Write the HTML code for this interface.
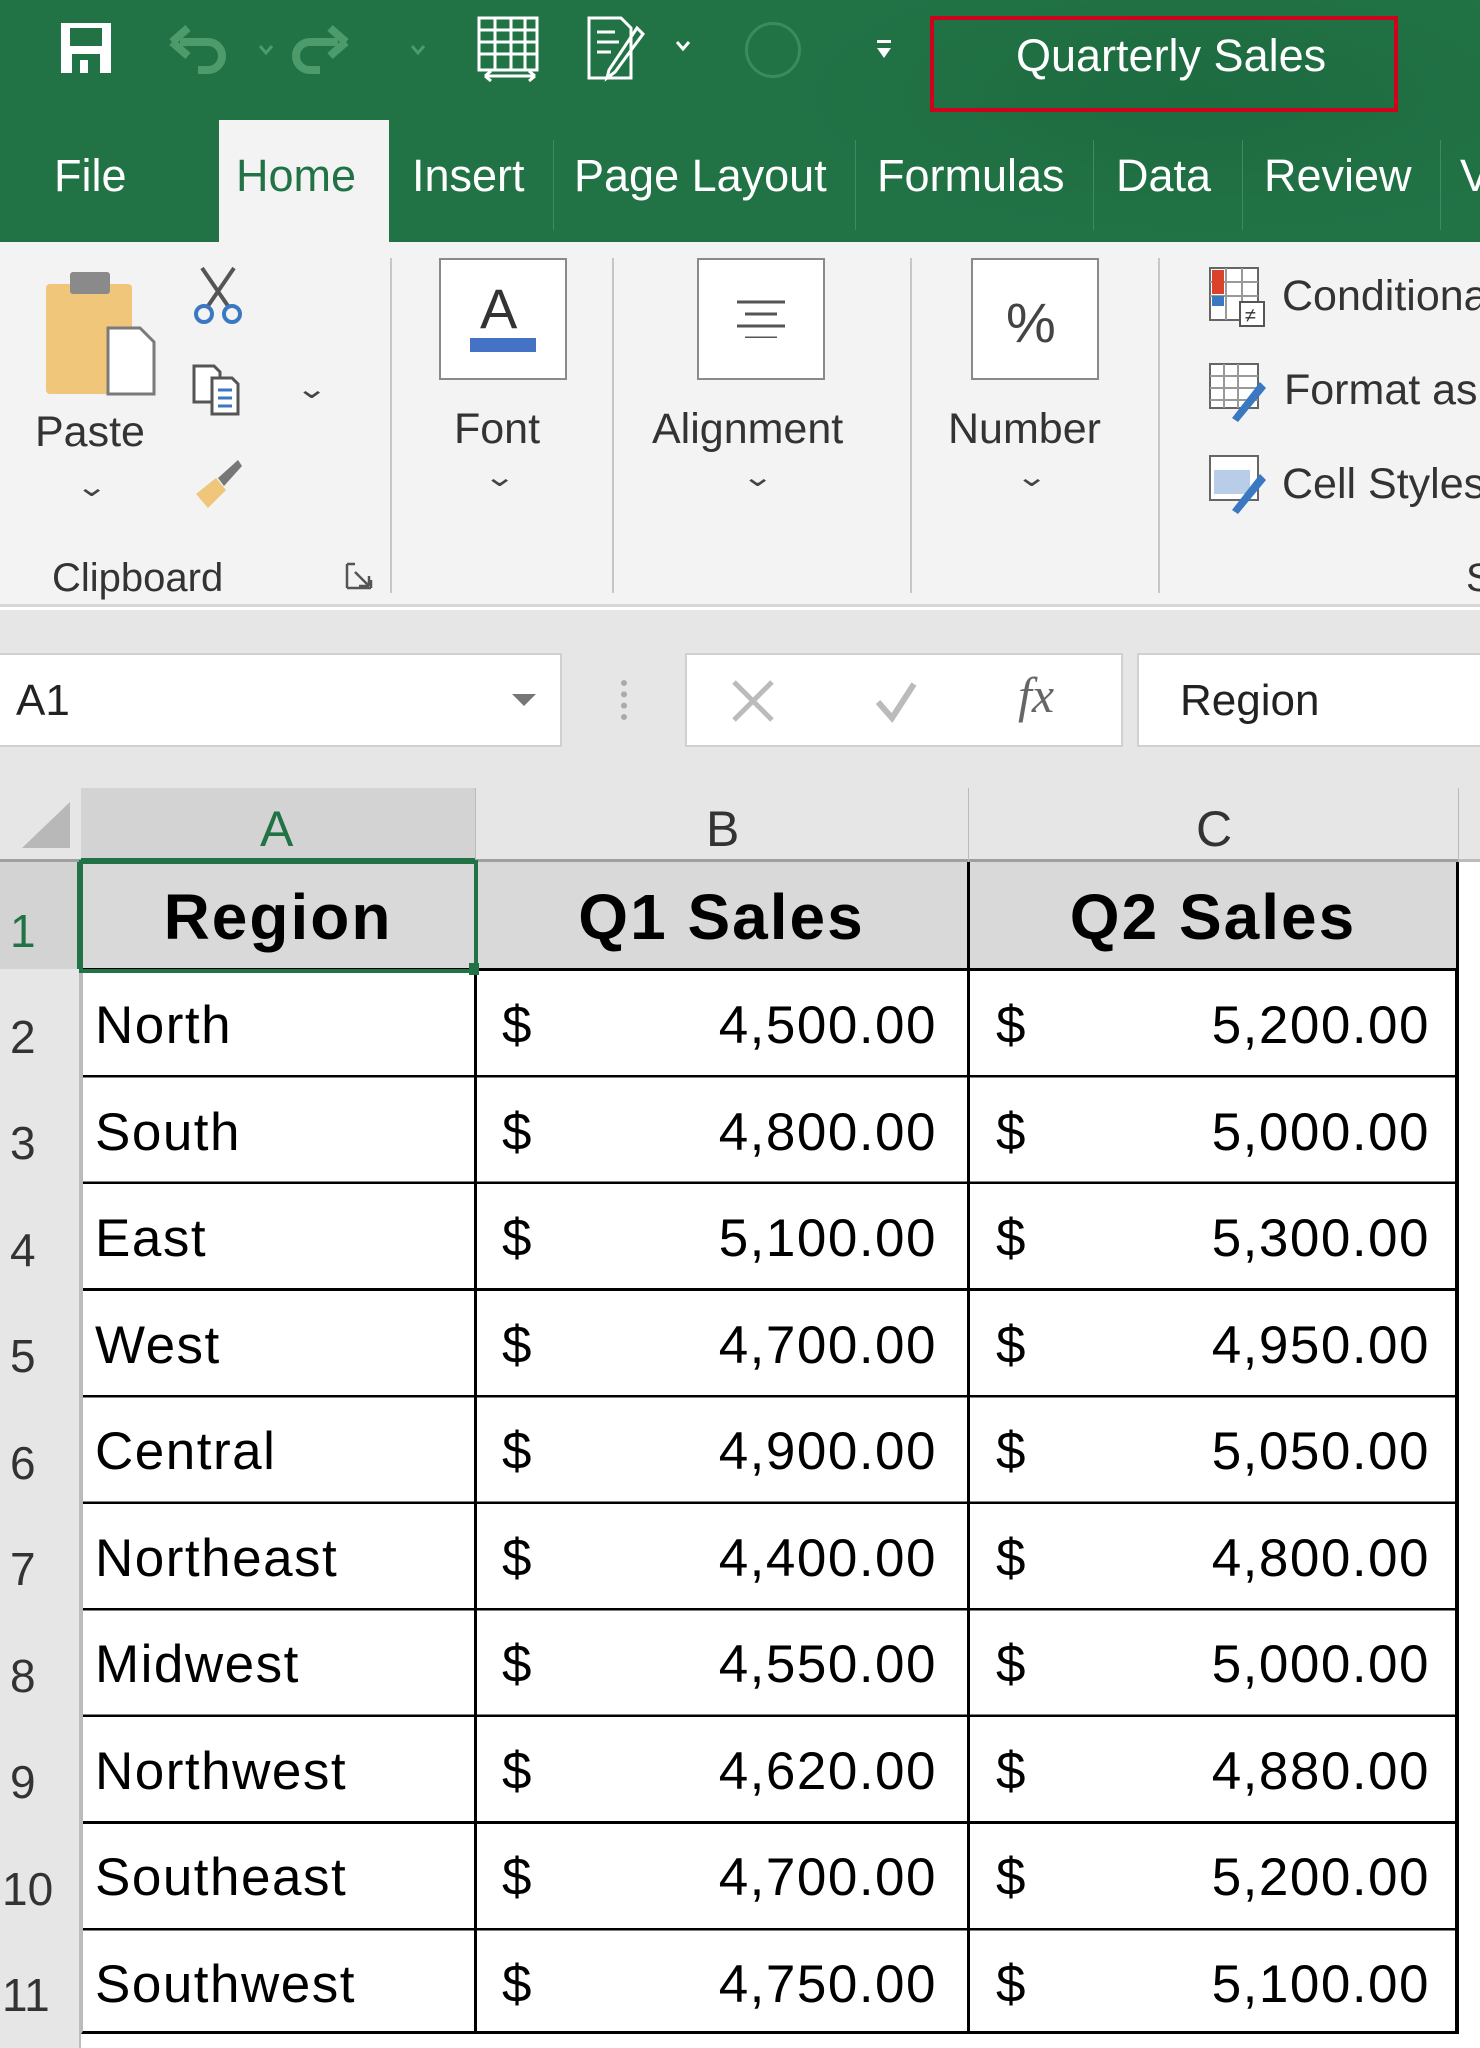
<!DOCTYPE html>
<html><head><meta charset="utf-8"><style>
*{margin:0;padding:0;box-sizing:border-box}
body{width:1480px;height:2048px;position:relative;overflow:hidden;background:#fff;font-family:"Liberation Sans",sans-serif}
.a{position:absolute;white-space:nowrap}
.tab{position:absolute;top:150px;font-size:45px;color:#fff;white-space:nowrap}
.sep{position:absolute;top:140px;width:1px;height:90px;background:#3f8a5e}
.rb{position:absolute;font-size:43px;color:#333;white-space:nowrap}
.vl{position:absolute;top:258px;width:2px;height:335px;background:#c6c6c6}
.box{position:absolute;top:258px;width:128px;height:122px;border:2px solid #8a8a8a;background:#fff}
.chev{position:absolute;font-size:28px;color:#444;transform:scaleX(1.4)}
.rh{position:absolute;left:0;width:81px;font-size:46px;color:#333;padding-left:10px}
.cell{position:absolute;font-size:53px;color:#000;white-space:nowrap;letter-spacing:1.5px}
</style></head><body>
<div class="a" style="left:0;top:0;width:1480px;height:242px;background:#217346"></div>
<div class="a" style="left:780px;top:0;width:700px;height:242px;background:radial-gradient(ellipse at 60% 40%,#1d6b40 0%,#217346 70%)"></div>
<svg class="a" style="left:58px;top:20px" width="56" height="56" viewBox="0 0 56 56"><rect x="3" y="3" width="50" height="50" fill="#fff"/><rect x="12" y="8" width="32" height="18" fill="#217346"/><rect x="14" y="34" width="28" height="19" fill="#217346"/><rect x="22" y="40" width="8" height="13" fill="#fff"/></svg>
<svg class="a" style="left:168px;top:22px" width="270" height="56" viewBox="0 0 270 56"><g fill="none" stroke="#4d9a6b" stroke-width="8"><path d="M12 20 H40 a14 14 0 0 1 0 28 H30"/><path d="M4 20 L20 6 M4 20 L20 34"/><path d="M170 20 H142 a14 14 0 0 0 0 28 H152"/><path d="M178 20 L162 6 M178 20 L162 34"/></g><g fill="none" stroke="#4d9a6b" stroke-width="3"><path d="M92 24 l6 7 l6 -7"/><path d="M244 24 l6 7 l6 -7"/></g></svg>
<svg class="a" style="left:475px;top:14px" width="70" height="68" viewBox="0 0 70 68"><g fill="none" stroke="#fff" stroke-width="3"><rect x="4" y="4" width="58" height="52"/><path d="M4 16H62M4 28H62M4 40H62M20 4V56M36 4V56M50 4V56"/><path d="M10 62H60M10 62l6-5M10 62l6 5M60 62l-6-5M60 62l-6 5"/></g></svg>
<svg class="a" style="left:585px;top:14px" width="110" height="68" viewBox="0 0 110 68"><g fill="none" stroke="#fff" stroke-width="3"><path d="M4 4H36L46 14V64H4Z"/><path d="M12 18H30M12 28H34M12 38H26"/><path d="M52 14L24 56L22 64L30 58L58 20Z"/><path d="M92 28l6 7l6-7"/></g></svg>
<div class="a" style="left:745px;top:22px;width:56px;height:56px;border:3px solid #3d8a5c;border-radius:50%"></div>
<svg class="a" style="left:875px;top:40px" width="20" height="24"><rect x="2" y="0" width="14" height="3" fill="#fff"/><path d="M2 8H16L9 18Z" fill="#fff"/></svg>
<div class="a" style="left:930px;top:16px;width:468px;height:96px;border:4px solid #d0021b"></div>
<div class="a" style="left:1016px;top:30px;font-size:45px;color:#fff">Quarterly Sales</div>
<div class="a" style="left:219px;top:120px;width:170px;height:122px;background:#f3f3f3"></div>
<div class="tab" style="left:54px">File</div>
<div class="tab" style="left:236px;color:#217346">Home</div>
<div class="tab" style="left:412px">Insert</div>
<div class="tab" style="left:574px">Page Layout</div>
<div class="tab" style="left:877px">Formulas</div>
<div class="tab" style="left:1116px">Data</div>
<div class="tab" style="left:1264px">Review</div>
<div class="tab" style="left:1460px">V</div>
<div class="sep" style="left:553px"></div><div class="sep" style="left:855px"></div><div class="sep" style="left:1093px"></div><div class="sep" style="left:1242px"></div><div class="sep" style="left:1440px"></div>
<div class="a" style="left:0;top:242px;width:1480px;height:365px;background:#f3f3f3;border-bottom:3px solid #d6d6d6"></div>
<svg class="a" style="left:44px;top:268px" width="115" height="130" viewBox="0 0 115 130"><rect x="2" y="16" width="86" height="110" rx="4" fill="#efc67a"/><rect x="26" y="4" width="40" height="22" rx="3" fill="#8a8a8a"/><path d="M64 60H96L110 74V126H64Z" fill="#fff" stroke="#7a7a7a" stroke-width="3"/></svg>
<svg class="a" style="left:188px;top:266px" width="60" height="60" viewBox="0 0 60 60"><g fill="none" stroke="#555" stroke-width="4"><path d="M14 2L40 40M46 2L20 40"/></g><g fill="none" stroke="#3b78c2" stroke-width="4"><circle cx="16" cy="48" r="8"/><circle cx="44" cy="48" r="8"/></g></svg>
<svg class="a" style="left:190px;top:362px" width="56" height="56" viewBox="0 0 56 56"><g fill="#fff" stroke="#555" stroke-width="3"><path d="M4 4H24L30 10V40H4Z"/><path d="M22 16H42L48 22V52H22Z"/></g><path d="M28 28H42M28 36H42M28 44H42" stroke="#3b78c2" stroke-width="3"/></svg>
<div class="chev" style="left:300px;top:372px">⌄</div>
<svg class="a" style="left:190px;top:456px" width="56" height="56" viewBox="0 0 56 56"><path d="M6 38L26 22L36 34L18 52Z" fill="#efc67a"/><path d="M28 22L48 4L52 10L34 30Z" fill="#777"/></svg>
<div class="rb" style="left:35px;top:408px">Paste</div>
<div class="chev" style="left:80px;top:470px">⌄</div>
<div class="rb" style="left:52px;top:556px;font-size:40px">Clipboard</div>
<svg class="a" style="left:345px;top:562px" width="30" height="30"><path d="M2 2H10M2 2V26M2 26H26M26 26V18M10 10L24 24M24 24H14M24 24V14" stroke="#555" stroke-width="2.5" fill="none"/></svg>
<div class="vl" style="left:390px"></div><div class="vl" style="left:612px"></div><div class="vl" style="left:910px"></div><div class="vl" style="left:1158px"></div>
<div class="box" style="left:439px"></div>
<div class="a" style="left:480px;top:276px;font-size:56px;color:#333">A</div>
<div class="a" style="left:470px;top:338px;width:66px;height:14px;background:#4472c4"></div>
<div class="rb" style="left:454px;top:405px">Font</div><div class="chev" style="left:488px;top:460px">⌄</div>
<div class="box" style="left:697px"></div>
<svg class="a" style="left:735px;top:298px" width="52" height="40"><path d="M2 4H50M10 16H42M2 28H50M10 40H42" stroke="#555" stroke-width="3"/></svg>
<div class="rb" style="left:652px;top:405px">Alignment</div><div class="chev" style="left:746px;top:460px">⌄</div>
<div class="box" style="left:971px"></div>
<div class="a" style="left:1006px;top:290px;font-size:56px;color:#444">%</div>
<div class="rb" style="left:948px;top:405px">Number</div><div class="chev" style="left:1020px;top:460px">⌄</div>
<svg class="a" style="left:1208px;top:266px" width="60" height="64"><rect x="2" y="2" width="48" height="52" fill="#fff" stroke="#666" stroke-width="2"/><path d="M2 16H50M2 30H50M18 2V54M34 2V54" stroke="#999" stroke-width="2"/><rect x="4" y="4" width="12" height="24" fill="#d9432b"/><rect x="4" y="30" width="12" height="10" fill="#3b78c2"/><rect x="32" y="36" width="24" height="24" fill="#fff" stroke="#555" stroke-width="2"/><text x="37" y="56" font-size="20" fill="#333">≠</text></svg>
<div class="rb" style="left:1282px;top:272px">Conditional Formatting</div>
<svg class="a" style="left:1208px;top:362px" width="62" height="62"><rect x="2" y="2" width="48" height="44" fill="#fff" stroke="#666" stroke-width="2"/><path d="M2 14H50M2 26H50M2 38H50M16 2V46M30 2V46" stroke="#999" stroke-width="2"/><path d="M24 56L52 20L58 26L30 60Z" fill="#3b78c2"/></svg>
<div class="rb" style="left:1284px;top:366px">Format as Table</div>
<svg class="a" style="left:1208px;top:454px" width="62" height="62"><rect x="2" y="2" width="48" height="44" fill="#fff" stroke="#666" stroke-width="2"/><rect x="6" y="16" width="36" height="24" fill="#b7cde8"/><path d="M24 56L52 20L58 26L30 60Z" fill="#3b78c2"/></svg>
<div class="rb" style="left:1282px;top:460px">Cell Styles</div>
<div class="rb" style="left:1466px;top:556px;font-size:40px">S</div>
<div class="a" style="left:0;top:610px;width:1480px;height:178px;background:#e6e6e6"></div>
<div class="a" style="left:-4px;top:653px;width:566px;height:94px;background:#fff;border:2px solid #d0d0d0"></div>
<div class="a" style="left:16px;top:676px;font-size:44px;color:#222">A1</div>
<svg class="a" style="left:512px;top:694px" width="24" height="14"><path d="M0 0H24L12 12Z" fill="#777"/></svg>
<div class="a" style="left:621px;top:680px;width:6px;height:40px;border-left:6px dotted #aaa"></div>
<div class="a" style="left:685px;top:653px;width:438px;height:94px;background:#fff;border:2px solid #d0d0d0"></div>
<svg class="a" style="left:730px;top:678px" width="220" height="46"><path d="M4 4L42 42M42 4L4 42" stroke="#bbb" stroke-width="5"/><path d="M148 24L162 40L184 6" stroke="#bbb" stroke-width="6" fill="none"/></svg>
<div class="a" style="left:1018px;top:666px;font-size:50px;color:#666;font-family:'Liberation Serif',serif;font-style:italic">fx</div>
<div class="a" style="left:1137px;top:653px;width:360px;height:94px;background:#fff;border:2px solid #d0d0d0"></div>
<div class="a" style="left:1180px;top:676px;font-size:44px;color:#222">Region</div>
<div class="a" style="left:0;top:788px;width:1458px;height:74px;background:#e6e6e6;border-bottom:3px solid #9f9f9f"></div>
<div class="a" style="left:1458px;top:788px;width:22px;height:74px;background:#e6e6e6;border-bottom:3px solid #bbb"></div>
<svg class="a" style="left:18px;top:800px" width="54" height="50"><path d="M52 2V48H4Z" fill="#b8b8b8"/></svg>
<div class="a" style="left:81px;top:788px;width:394px;height:74px;background:#d3d3d3;border-bottom:4px solid #217346"></div>
<div class="a" style="left:475px;top:788px;width:1px;height:74px;background:#bbb"></div>
<div class="a" style="left:968px;top:788px;width:1px;height:74px;background:#bbb"></div>
<div class="a" style="left:1458px;top:788px;width:1px;height:74px;background:#bbb"></div>
<div class="a" style="left:260px;top:800px;font-size:50px;color:#217346">A</div>
<div class="a" style="left:706px;top:800px;font-size:50px;color:#333">B</div>
<div class="a" style="left:1196px;top:800px;font-size:50px;color:#333">C</div>
<div class="a" style="left:0;top:862px;width:81px;height:1186px;background:#e6e6e6;border-right:2px solid #bdbdbd"></div>
<div class="a" style="left:0;top:862px;width:81px;height:107px;background:#d3d3d3;border-right:4px solid #217346"></div>
<div class="rh" style="top:904px;color:#217346">1</div>
<div class="rh" style="top:1010px">2</div><div class="rh" style="top:1116px">3</div><div class="rh" style="top:1223px">4</div><div class="rh" style="top:1329px">5</div><div class="rh" style="top:1436px">6</div><div class="rh" style="top:1542px">7</div><div class="rh" style="top:1649px">8</div><div class="rh" style="top:1755px">9</div><div class="rh" style="top:1862px;padding-left:2px">10</div><div class="rh" style="top:1968px;padding-left:2px">11</div>
<div class="a" style="left:81px;top:862px;width:1377px;height:107px;background:#d9d9d9"></div>
<div class="a" style="left:81px;top:968px;width:1377px;height:1066px;border-top:3px solid #000;border-bottom:3px solid #000;border-right:3px solid #000;border-left:2px solid #bbb;background:repeating-linear-gradient(to bottom,transparent 0,transparent 104px,#000 104px,#000 106.6px)"></div>
<div class="a" style="left:474px;top:862px;width:3px;height:1172px;background:#000"></div>
<div class="a" style="left:967px;top:862px;width:3px;height:1172px;background:#000"></div>
<div class="a" style="left:1456px;top:862px;width:3px;height:1172px;background:#000"></div>
<div class="a" style="left:79px;top:860px;width:399px;height:113px;border:4px solid #217346"></div>
<div class="a" style="left:469px;top:963px;width:10px;height:12px;background:#217346"></div>
<div class="cell" style="left:81px;width:394px;text-align:center;top:880px;font-size:64px;font-weight:bold;letter-spacing:2px">Region</div>
<div class="cell" style="left:475px;width:493px;text-align:center;top:880px;font-size:64px;font-weight:bold;letter-spacing:2px">Q1 Sales</div>
<div class="cell" style="left:968px;width:490px;text-align:center;top:880px;font-size:64px;font-weight:bold;letter-spacing:2px">Q2 Sales</div>
<div id="rows"></div>
<script>
var d=[["North","4,500.00","5,200.00"],["South","4,800.00","5,000.00"],["East","5,100.00","5,300.00"],["West","4,700.00","4,950.00"],["Central","4,900.00","5,050.00"],["Northeast","4,400.00","4,800.00"],["Midwest","4,550.00","5,000.00"],["Northwest","4,620.00","4,880.00"],["Southeast","4,700.00","5,200.00"],["Southwest","4,750.00","5,100.00"]];
var h="";d.forEach(function(r,i){var t=995+i*106.5;
h+='<div class="cell" style="left:95px;top:'+t+'px">'+r[0]+'</div>';
h+='<div class="cell" style="left:502px;top:'+t+'px">$</div><div class="cell" style="left:475px;width:462px;text-align:right;top:'+t+'px">'+r[1]+'</div>';
h+='<div class="cell" style="left:996px;top:'+t+'px">$</div><div class="cell" style="left:968px;width:462px;text-align:right;top:'+t+'px">'+r[2]+'</div>';});
document.getElementById("rows").innerHTML=h;
</script>
</body></html>
